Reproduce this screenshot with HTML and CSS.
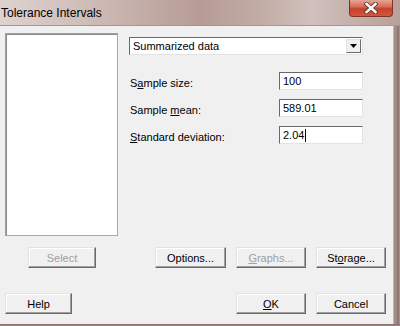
FILE: index.html
```html
<!DOCTYPE html>
<html>
<head>
    <title>Tolerance Intervals</title>
    <link rel="stylesheet" href="styles.css">
</head>
<body>
    <div class="window">
        <div class="titlebar">
            <span class="title">Tolerance Intervals</span>
            <div class="close-button">
                <svg width="18" height="12" viewBox="0 0 18 12">
                    <path d="M4.5 2 L13.5 10 M13.5 2 L4.5 10" stroke="#5a3a34" stroke-width="4.2" stroke-linecap="square"/>
                    <path d="M4.5 2 L13.5 10 M13.5 2 L4.5 10" stroke="#fff" stroke-width="2.4" stroke-linecap="square"/>
                </svg>
            </div>
        </div>
        <div class="frame">
            <div class="client">
                <div class="main">
                    <div class="listbox"></div>
                    <div class="panel">
                        <div class="dropdown">
                            <span class="dropdown-text">Summarized data</span>
                            <span class="dropdown-arrow">
                                <svg width="7" height="4" viewBox="0 0 7 4"><path d="M0 0 H7 L3.5 4 Z" fill="#000"/></svg>
                            </span>
                        </div>
                        <div class="fields">
                            <div class="field-row">
                                <label>S<u>a</u>mple size:</label>
                                <div class="input">100</div>
                            </div>
                            <div class="field-row">
                                <label>Sample <u>m</u>ean:</label>
                                <div class="input">589.01</div>
                            </div>
                            <div class="field-row">
                                <label><u>S</u>tandard deviation:</label>
                                <div class="input">2.04<span class="caret"></span></div>
                            </div>
                        </div>
                    </div>
                </div>
                <div class="button-row first-row">
                    <button class="btn btn-select" disabled>Select</button>
                    <div class="spacer"></div>
                    <button class="btn btn-options">Options...</button>
                    <button class="btn" disabled><u>G</u>raphs...</button>
                    <button class="btn">St<u>o</u>rage...</button>
                </div>
                <div class="button-row second-row">
                    <button class="btn btn-help">Help</button>
                    <div class="spacer"></div>
                    <button class="btn"><u>O</u>K</button>
                    <button class="btn">Cancel</button>
                </div>
            </div>
            <div class="frame-right"></div>
        </div>
        <div class="frame-bottom"></div>
    </div>
</body>
</html>
```

FILE: styles.css
```css
body {
    margin: 0;
    width: 400px;
    height: 326px;
    overflow: hidden;
    font-family: "Liberation Sans", Arial, sans-serif;
    font-size: 11px;
    color: #000;
}

.window {
    display: flex;
    flex-direction: column;
    width: 400px;
    height: 326px;
}

.titlebar {
    height: 25px;
    display: flex;
    justify-content: space-between;
    align-items: flex-start;
    padding-right: 7px;
    border-bottom: 1px solid #a89490;
    background: linear-gradient(to right, #ded2cf 0, #cdb9b4 25%, #b69c95 50%, #c2aca6 65%, #d0c0bc 78%, #b9a09a 100%);
}

.title {
    font-size: 12px;
    line-height: 14px;
    padding-top: 6px;
    padding-left: 1px;
    color: #000;
}

.close-button {
    width: 44px;
    height: 17px;
    box-sizing: border-box;
    border: 1px solid #7e3528;
    border-top: none;
    border-radius: 0 0 4px 4px;
    background: linear-gradient(to bottom, #e5a494 0, #d7705c 40%, #c5412c 55%, #d4563e 100%);
    display: flex;
    justify-content: center;
    align-items: center;
}

.frame {
    display: flex;
    flex: 1;
}

.client {
    width: 393px;
    box-sizing: border-box;
    background-color: #f0f0f0;
    padding: 7px 7px 0 5px;
}

.frame-right {
    flex: 1;
    background: linear-gradient(to right, #d8cfcc 0, #a48c86 20%, #a48c86 55%, #7d6964 70%, #b4a09b 100%);
}

.frame-bottom {
    height: 2px;
    background: linear-gradient(to bottom, #7d6964, #a48c86);
}

.main {
    display: flex;
    height: 203px;
}

.listbox {
    width: 113px;
    height: 203px;
    box-sizing: border-box;
    background-color: #fff;
    border: 1px solid;
    border-color: #a0a0a0 #a8a8a8 #a8a8a8 #a0a0a0;
    box-shadow: inset 1px 1px 0 #8c8c8c;
}

.panel {
    margin-left: 11px;
    margin-top: 4px;
    width: 234px;
}

.dropdown {
    height: 18px;
    box-sizing: border-box;
    display: flex;
    align-items: center;
    justify-content: space-between;
    background-color: #fff;
    border: 1px solid;
    border-color: #696969 #e3e3e3 #e3e3e3 #696969;
    padding: 0 1px 0 3px;
}

.dropdown-arrow {
    width: 15px;
    height: 14px;
    box-sizing: border-box;
    display: flex;
    align-items: center;
    justify-content: center;
    background-color: #f0f0f0;
    border: 1px solid;
    border-color: #e3e3e3 #696969 #696969 #e3e3e3;
}

.fields {
    margin-top: 17px;
    display: flex;
    flex-direction: column;
    gap: 9px;
}

.field-row {
    display: flex;
    justify-content: space-between;
    align-items: center;
    height: 18px;
    padding-left: 1px;
}

.field-row label {
    padding-top: 3px;
}

.input {
    width: 84px;
    height: 18px;
    box-sizing: border-box;
    display: flex;
    align-items: center;
    background-color: #fff;
    border: 1px solid;
    border-color: #696969 #e3e3e3 #e3e3e3 #696969;
    padding-left: 3px;
}

.caret {
    display: inline-block;
    width: 1px;
    height: 13px;
    margin-left: 1px;
    background-color: #000;
}

.button-row {
    display: flex;
    gap: 10px;
    height: 21px;
}

.first-row {
    margin-top: 11px;
}

.second-row {
    margin-top: 25px;
}

.spacer {
    flex: 1;
}

.btn {
    width: 70px;
    height: 21px;
    box-sizing: border-box;
    padding: 0;
    font-family: "Liberation Sans", Arial, sans-serif;
    font-size: 11px;
    color: #000;
    background-color: #f0f0f0;
    border: 1px solid;
    border-color: #e3e3e3 #696969 #696969 #e3e3e3;
    box-shadow: inset -1px -1px 0 #a0a0a0, inset 1px 1px 0 #fff;
}

.btn:disabled {
    color: #a0a0a0;
}

.btn-select {
    width: 68px;
    margin-left: 23px;
}

.btn-options {
    width: 71px;
}

.btn-help {
    width: 67px;
}
```
